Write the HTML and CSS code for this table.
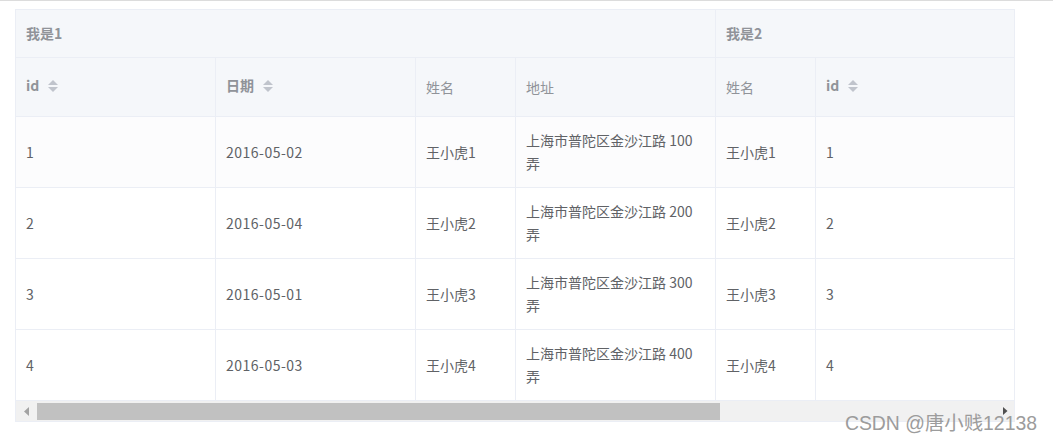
FILE: index.html
```html
<!DOCTYPE html>
<html lang="zh-CN">
<head>
<meta charset="utf-8">
<title>表格</title>
<link rel="stylesheet" href="styles.css">
</head>
<body>
<div class="page">
  <div class="table-wrap">
    <div class="grid">
      <div class="th group span4"><div class="cell">我是1</div></div>
      <div class="th group span2"><div class="cell">我是2</div></div>

      <div class="th sortable"><div class="cell">id<svg class="caret" width="24" height="34" viewBox="0 0 24 34"><path d="M7 15 L17 15 L12 10 Z"/><path d="M7 17 L17 17 L12 22 Z"/></svg></div></div>
      <div class="th sortable"><div class="cell">日期<svg class="caret" width="24" height="34" viewBox="0 0 24 34"><path d="M7 15 L17 15 L12 10 Z"/><path d="M7 17 L17 17 L12 22 Z"/></svg></div></div>
      <div class="th"><div class="cell">姓名</div></div>
      <div class="th"><div class="cell">地址</div></div>
      <div class="th"><div class="cell">姓名</div></div>
      <div class="th sortable"><div class="cell">id<svg class="caret" width="24" height="34" viewBox="0 0 24 34"><path d="M7 15 L17 15 L12 10 Z"/><path d="M7 17 L17 17 L12 22 Z"/></svg></div></div>

      <div class="td hl"><div class="cell">1</div></div>
      <div class="td hl"><div class="cell num">2016-05-02</div></div>
      <div class="td hl"><div class="cell">王小虎1</div></div>
      <div class="td hl"><div class="cell">上海市普陀区金沙江路 100弄</div></div>
      <div class="td hl"><div class="cell">王小虎1</div></div>
      <div class="td hl"><div class="cell">1</div></div>

      <div class="td"><div class="cell">2</div></div>
      <div class="td"><div class="cell num">2016-05-04</div></div>
      <div class="td"><div class="cell">王小虎2</div></div>
      <div class="td"><div class="cell">上海市普陀区金沙江路 200弄</div></div>
      <div class="td"><div class="cell">王小虎2</div></div>
      <div class="td"><div class="cell">2</div></div>

      <div class="td"><div class="cell">3</div></div>
      <div class="td"><div class="cell num">2016-05-01</div></div>
      <div class="td"><div class="cell">王小虎3</div></div>
      <div class="td"><div class="cell">上海市普陀区金沙江路 300弄</div></div>
      <div class="td"><div class="cell">王小虎3</div></div>
      <div class="td"><div class="cell">3</div></div>

      <div class="td"><div class="cell">4</div></div>
      <div class="td"><div class="cell num">2016-05-03</div></div>
      <div class="td"><div class="cell">王小虎4</div></div>
      <div class="td"><div class="cell">上海市普陀区金沙江路 400弄</div></div>
      <div class="td"><div class="cell">王小虎4</div></div>
      <div class="td"><div class="cell">4</div></div>
    </div>
    <div class="hscroll">
      <div class="sbtn left"><svg width="6" height="9" viewBox="0 0 6 9"><path d="M5 0 L5 9 L0 4.5 Z"/></svg></div>
      <div class="thumb"></div>
      <div class="rest"></div>
      <div class="sbtn right"><svg width="5" height="8" viewBox="0 0 5 8"><path d="M0 0 L0 8 L4.5 4 Z"/></svg></div>
    </div>
  </div>
  <div class="watermark">CSDN @唐小贱12138</div>
</div>
</body>
</html>
```

FILE: styles.css
```css
html, body {
  margin: 0;
  padding: 0;
  background: #ffffff;
}

.page {
  position: relative;
  height: 441px;
  box-sizing: border-box;
  border-top: 1px solid #dcdcdc;
  padding: 8px 0 0 15px;
  font-family: "Noto Sans CJK SC", "Liberation Sans", sans-serif;
  font-size: 14px;
}

.table-wrap {
  width: 998px;
  border: 1px solid #ebeef5;
  overflow: hidden;
}

.grid {
  display: grid;
  grid-template-columns: 200px 200px 100px 200px 100px 200px;
  width: 1000px;
}

.th, .td {
  box-sizing: border-box;
  border-right: 1px solid #ebeef5;
  border-bottom: 1px solid #ebeef5;
  padding: 12px 0;
  display: flex;
  align-items: center;
}

.th {
  background: #f5f7fa;
  color: #909399;
}

.td {
  color: #606266;
  background: #ffffff;
}

.td.hl {
  background: #fcfcfd;
}

.span4 { grid-column: span 4; }
.span2 { grid-column: span 2; }

.cell {
  padding: 0 10px;
  line-height: 23px;
  word-break: normal;
}

.cell.num {
  letter-spacing: 0.5px;
}

.group .cell,
.sortable .cell {
  font-weight: 700;
}

.caret {
  display: inline-block;
  vertical-align: middle;
  fill: #c0c4cc;
  margin-left: 2px;
}

.hscroll {
  display: flex;
  height: 20px;
  background: #f1f1f1;
}

.sbtn {
  display: flex;
  align-items: center;
  justify-content: center;
}

.sbtn.left {
  width: 21px;
  justify-content: flex-start;
  padding-left: 8px;
  box-sizing: border-box;
  fill: #a3a3a3;
}

.sbtn.right {
  width: 17px;
  fill: #505050;
}

.thumb {
  width: 683px;
  height: 17px;
  margin-top: 2px;
  background: #c1c1c1;
}

.rest {
  flex: 1;
}

.watermark {
  position: absolute;
  right: 16px;
  top: 411px;
  font-family: "Liberation Sans", "Noto Sans CJK SC", sans-serif;
  font-size: 19.4px;
  line-height: 22px;
  color: #9c9c9c;
  white-space: nowrap;
}
```
